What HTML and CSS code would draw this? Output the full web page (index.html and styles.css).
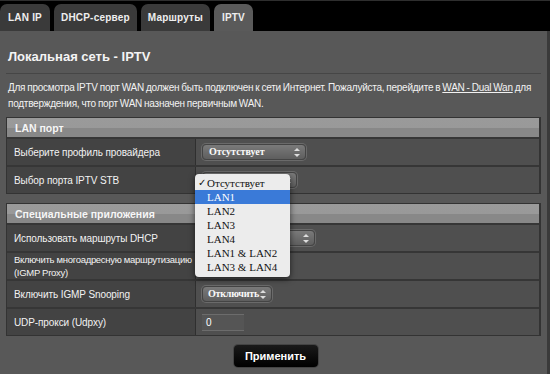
FILE: index.html
```html
<!DOCTYPE html>
<html>
<head>
<meta charset="utf-8">
<link rel="stylesheet" href="styles.css">
</head>
<body>
<div class="tabs">
  <div class="tab">LAN IP</div>
  <div class="tab">DHCP-сервер</div>
  <div class="tab">Маршруты</div>
  <div class="tab active">IPTV</div>
</div>
<div class="panel">
  <h1 class="title">Локальная сеть - IPTV</h1>
  <p class="desc">Для просмотра IPTV порт WAN должен быть подключен к сети Интернет. Пожалуйста, перейдите в <span class="link">WAN - Dual Wan</span> для<br>подтверждения, что порт WAN назначен первичным WAN.</p>

  <div class="section">
    <div class="head">LAN порт</div>
    <div class="row"><div class="lbl">Выберите профиль провайдера</div><div class="val"><div class="sel w105">Отсутствует<span class="arr"></span></div></div></div>
    <div class="row"><div class="lbl">Выбор порта IPTV STB</div><div class="val"><div class="sel w95"><span class="arr"></span></div></div></div>
  </div>

  <div class="section s2">
    <div class="head">Специальные приложения</div>
    <div class="row"><div class="lbl">Использовать маршруты DHCP</div><div class="val"><div class="sel w115"><span class="arr"></span></div></div></div>
    <div class="row"><div class="lbl tight">Включить многоадресную маршрутизацию (IGMP Proxy)</div><div class="val"></div></div>
    <div class="row"><div class="lbl">Включить IGMP Snooping</div><div class="val"><div class="sel w70">Отключить<span class="arr"></span></div></div></div>
    <div class="row"><div class="lbl">UDP-прокси (Udpxy)</div><div class="val"><div class="inp">0</div></div></div>
  </div>

  <div class="actions"><div class="btn">Применить</div></div>

  <ul class="menu">
    <li><span class="chk">✓</span>Отсутствует</li>
    <li class="hl">LAN1</li>
    <li>LAN2</li>
    <li>LAN3</li>
    <li>LAN4</li>
    <li>LAN1 &amp; LAN2</li>
    <li>LAN3 &amp; LAN4</li>
  </ul>
</div>
</body>
</html>
```
FILE: styles.css
```css
* { box-sizing: border-box; }
html, body { margin: 0; padding: 0; }
body {
  width: 550px; height: 374px; overflow: hidden;
  background: #000;
  font-family: "Liberation Sans", Arial, sans-serif;
  color: #f2f2f2;
}
.tabs {
  height: 31px;
  display: flex; align-items: flex-end; gap: 4px;
  padding-left: 0;
  border-top: 1px solid #2e2e2e;
  background: #000;
}
.tab {
  height: 27px;
  padding: 0 7px;
  background: #3a3a3a;
  border-radius: 7px 7px 0 0;
  font-size: 10px; font-weight: bold;
  letter-spacing: 0.2px;
  display: flex; align-items: center;
  color: #eee;
}
.tab:first-child { padding-left: 8px; padding-right: 8px; }
.tab.active { background: #5a5a5a; padding: 0 8px; }
.panel {
  position: relative;
  height: 343px;
  background: #585858;
  border-right: 3px solid #3a3a3a;
  padding: 0 6px 0 6px;
}
.title {
  margin: 0; font-size: 13px; font-weight: bold;
  padding: 18px 0 0 2px; height: 43px;
  border-bottom: 1px solid #464646;
  color: #f4f4f4;
}
.desc {
  margin: 0; padding: 6px 2px 0 2px;
  font-size: 10px; line-height: 16px;
  height: 43px;
  letter-spacing: -0.25px;
  word-spacing: -0.5px;
  white-space: nowrap;
}
.link { text-decoration: underline; }
.section { border: 1px solid #333; border-right: 2px solid #333; }
.s2 { margin-top: 9px; }
.head {
  height: 19px; padding-left: 8px;
  background: linear-gradient(#9a9a9a 0, #999 55%, #888 55%, #888 100%);
  font-size: 10.5px; font-weight: bold;
  display: flex; align-items: center;
  color: #f6f6f6;
}
.row {
  display: grid; grid-template-columns: 189px 1fr;
  min-height: 28px;
  border-top: 2px solid #363636;
}
.lbl {
  background: #434343;
  border-right: 1px solid #2f2f2f;
  font-size: 10px; line-height: 13px;
  letter-spacing: -0.1px;
  padding: 0 4px 0 7px;
  display: flex; align-items: center;
}
.lbl.tight { font-size: 9.5px; letter-spacing: -0.3px; padding-right: 0; }
.val {
  background: #4f4f4f;
  display: flex; align-items: center; padding-left: 6px;
}
.sel {
  position: relative;
  height: 16px; border-radius: 4px;
  background: linear-gradient(#7a7a7a, #5e5e5e);
  border: 1px solid #444;
  box-shadow: 0 0 0 1px #6a6a6a;
  font-family: "Liberation Serif", "Times New Roman", serif;
  font-weight: bold; font-size: 10px;
  color: #fafafa;
  padding-left: 6px; line-height: 14px;
}
.w105 { width: 104px; }
.w95 { width: 95px; }
.w115 { width: 113px; }
.w70 { width: 70px; padding-left: 5px; letter-spacing: -0.2px; }
.arr {
  position: absolute; right: 5px; top: 3px;
  width: 6px; height: 9px;
}
.arr::before, .arr::after {
  content: ""; position: absolute; left: 0;
  border-left: 3px solid transparent; border-right: 3px solid transparent;
}
.arr::before { top: 0; border-bottom: 3px solid #ddd; }
.arr::after { bottom: 0; border-top: 3px solid #ddd; }
.inp {
  width: 42px; height: 17px;
  background: #555;
  border-top: 1px solid #6c6c6c; border-bottom: 1px solid #6c6c6c;
  font-size: 10px; padding-left: 4px; line-height: 15px;
  color: #fff;
}
.actions { display: flex; justify-content: center; padding-top: 9px; padding-left: 4px; }
.btn {
  width: 84px; height: 22px;
  background: linear-gradient(#1a1a1a, #000);
  border-radius: 4px;
  box-shadow: 0 0 0 1px #444;
  font-weight: bold; font-size: 11px;
  display: flex; align-items: center; justify-content: center;
  color: #fff;
}
.menu {
  position: absolute; left: 195px; top: 143px;
  width: 95px; margin: 0; padding: 2px 0 3px;
  list-style: none;
  background: #ececec;
  border-radius: 4px;
  box-shadow: 0 2px 6px rgba(0,0,0,0.6);
  font-family: "Liberation Serif", "Times New Roman", serif;
  font-size: 11px; color: #111;
}
.menu li { height: 14px; line-height: 14px; padding-left: 12px; position: relative; }
.menu li.hl { background: #3a7ad8; color: #fff; }
.chk { position: absolute; left: 3px; font-family: "DejaVu Sans", sans-serif; font-size: 10px; }
```
